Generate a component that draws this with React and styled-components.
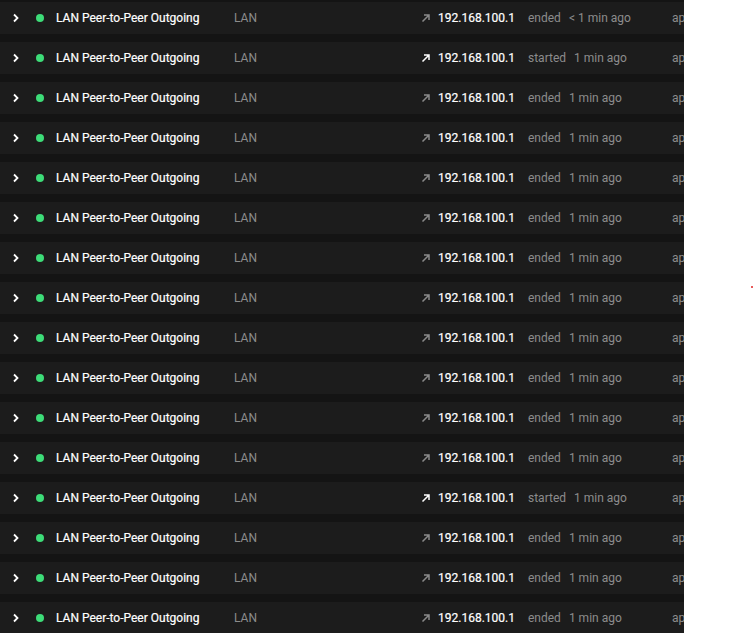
import React from 'react';
import styled, { createGlobalStyle } from 'styled-components';

const GlobalStyle = createGlobalStyle`
	body {
		margin: 0;
		background: #ffffff;
		font-family: Roboto, "Liberation Sans", sans-serif;
	}
`;

const Page = styled.div`
	position: relative;
	width: 754px;
	height: 633px;
	overflow: hidden;
`;

const Table = styled.div`
	width: 684px;
	height: 633px;
	overflow: hidden;
	background: #141414;
	padding-top: 2px;
	box-sizing: border-box;
	display: flex;
	flex-direction: column;
	gap: 8px;
`;

const Row = styled.div`
	height: 32px;
	flex-shrink: 0;
	background: #1c1c1c;
	display: grid;
	grid-template-columns: 36px 20px 178px 183px 21px 90px 144px 60px;
	align-items: center;
	font-size: 12px;
	white-space: nowrap;
`;

const Chevron = styled.div`
	padding-left: 12px;
	display: flex;
	align-items: center;
`;

const Dot = styled.span`
	width: 8px;
	height: 8px;
	border-radius: 50%;
	background: #3ddc78;
	display: block;
`;

const Name = styled.span`
	color: #ffffff;
	font-weight: 400;
	-webkit-text-stroke: 0.2px #ffffff;
`;

const Muted = styled.span`
	color: #8c8c8c;
`;

const ArrowCell = styled.div`
	padding-left: 4px;
	display: flex;
	align-items: center;
	color: ${p => (p.$active ? '#ffffff' : '#8a8a8a')};
`;

const Ip = styled.span`
	color: #ffffff;
	font-weight: 400;
	-webkit-text-stroke: 0.2px #ffffff;
`;

const StatusCell = styled.div`
	display: flex;
	gap: 8px;
	color: #8c8c8c;
`;

const RedMark = styled.span`
	position: absolute;
	left: 751px;
	top: 286px;
	width: 2px;
	height: 2px;
	background: #e85a5a;
`;

const rows = [
	{ status: 'ended', time: '< 1 min ago' },
	{ status: 'started', time: '1 min ago' },
	...Array(10).fill({ status: 'ended', time: '1 min ago' }),
	{ status: 'started', time: '1 min ago' },
	...Array(3).fill({ status: 'ended', time: '1 min ago' })
];

const ChevronIcon = () => (
	<svg width="8" height="10" viewBox="0 0 8 10">
		<path d="M2 1.5 L5.5 5 L2 8.5" fill="none" stroke="#ffffff" strokeWidth="1.8" />
	</svg>
);

const ArrowIcon = () => (
	<svg width="10" height="10" viewBox="0 0 10 10">
		<path d="M1.5 8.5 L8 2 M3 2 H8 V7" fill="none" stroke="currentColor" strokeWidth="1.5" />
	</svg>
);

export default function App() {
	return (
		<Page>
			<GlobalStyle />
			<Table>
				{rows.map((r, i) => (
					<Row key={i}>
						<Chevron><ChevronIcon /></Chevron>
						<Dot />
						<Name>LAN Peer-to-Peer Outgoing</Name>
						<Muted>LAN</Muted>
						<ArrowCell $active={r.status === 'started'}><ArrowIcon /></ArrowCell>
						<Ip>192.168.100.1</Ip>
						<StatusCell>
							<span>{r.status}</span>
							<span>{r.time}</span>
						</StatusCell>
						<Muted>app</Muted>
					</Row>
				))}
			</Table>
			<RedMark />
		</Page>
	);
}
